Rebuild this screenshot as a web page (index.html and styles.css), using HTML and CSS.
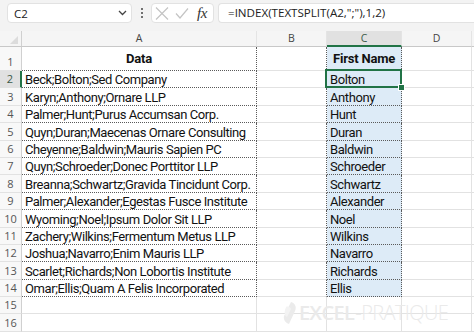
FILE: index.html
```html
<!DOCTYPE html>
<html>
<head>
<meta charset="utf-8">
<link rel="stylesheet" href="styles.css">
</head>
<body>
<div class="fbar">
  <div class="namebox"><span class="ref">C2</span>
    <svg class="chev" width="9" height="6" viewBox="0 0 9 6"><path d="M1 1 L4.5 4.5 L8 1" fill="none" stroke="#444" stroke-width="1.3"/></svg>
  </div>
  <div class="dots"><i></i><i></i><i></i></div>
  <div class="fxbox">
    <svg width="14" height="13" viewBox="0 0 14 13"><path d="M1 0.5 L13 12.5 M13 0.5 L1 12.5" stroke="#c4c4c4" stroke-width="1.2" fill="none"/></svg>
    <svg width="14" height="11" viewBox="0 0 14 11"><path d="M1 5.5 L5 10 L13 0.5" stroke="#c4c4c4" stroke-width="1.2" fill="none"/></svg>
    <span class="fx">fx</span>
  </div>
  <div class="formula">=INDEX(TEXTSPLIT(A2,";"),1,2)</div>
</div>
<div class="sheet">
  <div class="corner"><svg width="8" height="8" viewBox="0 0 8 8"><path d="M8 0 L8 8 L0 8 Z" fill="#dcdcdc"/></svg></div>
  <div class="ch">A</div><div class="ch">B</div><div class="ch sel">C</div><div class="ch">D</div><div class="ch last"></div>

  <div class="rh">1</div><div class="a t hd">Data</div><div class="b t"></div><div class="c t hd">First Name</div><div class="d"></div><div class="e"></div>
  <div class="rh sel">2</div><div class="a t">Beck;Bolton;Sed Company</div><div class="b t"></div><div class="c t active">Bolton</div><div class="d"></div><div class="e"></div>
  <div class="rh">3</div><div class="a t">Karyn;Anthony;Ornare LLP</div><div class="b t"></div><div class="c t">Anthony</div><div class="d"></div><div class="e"></div>
  <div class="rh">4</div><div class="a t">Palmer;Hunt;Purus Accumsan Corp.</div><div class="b t"></div><div class="c t">Hunt</div><div class="d"></div><div class="e"></div>
  <div class="rh">5</div><div class="a t">Quyn;Duran;Maecenas Ornare Consulting</div><div class="b t"></div><div class="c t">Duran</div><div class="d"></div><div class="e"></div>
  <div class="rh">6</div><div class="a t">Cheyenne;Baldwin;Mauris Sapien PC</div><div class="b t"></div><div class="c t">Baldwin</div><div class="d"></div><div class="e"></div>
  <div class="rh">7</div><div class="a t">Quyn;Schroeder;Donec Porttitor LLP</div><div class="b t"></div><div class="c t">Schroeder</div><div class="d"></div><div class="e"></div>
  <div class="rh">8</div><div class="a t">Breanna;Schwartz;Gravida Tincidunt Corp.</div><div class="b t"></div><div class="c t">Schwartz</div><div class="d"></div><div class="e"></div>
  <div class="rh">9</div><div class="a t">Palmer;Alexander;Egestas Fusce Institute</div><div class="b t"></div><div class="c t">Alexander</div><div class="d"></div><div class="e"></div>
  <div class="rh">10</div><div class="a t">Wyoming;Noel;Ipsum Dolor Sit LLP</div><div class="b t"></div><div class="c t">Noel</div><div class="d"></div><div class="e"></div>
  <div class="rh">11</div><div class="a t">Zachery;Wilkins;Fermentum Metus LLP</div><div class="b t"></div><div class="c t">Wilkins</div><div class="d"></div><div class="e"></div>
  <div class="rh">12</div><div class="a t">Joshua;Navarro;Enim Mauris LLP</div><div class="b t"></div><div class="c t">Navarro</div><div class="d"></div><div class="e"></div>
  <div class="rh">13</div><div class="a t">Scarlet;Richards;Non Lobortis Institute</div><div class="b t"></div><div class="c t">Richards</div><div class="d"></div><div class="e"></div>
  <div class="rh">14</div><div class="a t">Omar;Ellis;Quam A Felis Incorporated</div><div class="b t"></div><div class="c t">Ellis</div><div class="d"></div><div class="e"></div>
  <div class="rh">15</div><div class="a"></div><div class="b"></div><div class="c"></div><div class="d"></div><div class="e"></div>
  <div class="rh">16</div><div class="a"></div><div class="b"></div><div class="c"></div><div class="d"></div><div class="e"></div>

  <div class="watermark">
    <svg width="16" height="24" viewBox="0 0 16 24"><path d="M9 1 C13 2 15 6 13 10 L7 23 C4 22 1 19 2 15 Z" fill="#ebebeb"/><path d="M4 6 C6 5 8 6 9 8 L5 16 C3 15 2 12 3 9 Z" fill="#f3f3f3"/></svg>
    <span class="wm-bold">EXCEL</span><span class="wm-light">-PRATIQUE</span>
  </div>
</div>
</body>
</html>
```

FILE: styles.css
```css
html, body {
  margin: 0;
  padding: 0;
}
body {
  width: 474px;
  height: 335px;
  overflow: hidden;
  background: #fff;
  font-family: Roboto, "Liberation Sans", sans-serif;
}

/* formula bar */
.fbar {
  display: flex;
  align-items: flex-start;
  height: 31px;
  box-sizing: border-box;
  padding: 3px 0 0 7px;
  background: #f3f3f3;
  font-family: "Open Sans", sans-serif;
}
.namebox {
  width: 125px;
  height: 20px;
  box-sizing: border-box;
  background: #fff;
  border: 1px solid #e2e2e2;
  border-radius: 4px;
  display: flex;
  align-items: center;
  justify-content: space-between;
  padding: 0 4px 0 6px;
  font-size: 11.5px;
  color: #222;
}
.dots {
  width: 19px;
  height: 20px;
  display: flex;
  flex-direction: column;
  align-items: center;
  justify-content: center;
  gap: 2px;
}
.dots i {
  width: 2px;
  height: 2px;
  background: #444;
  border-radius: 1px;
}
.fxbox {
  width: 63px;
  height: 20px;
  box-sizing: border-box;
  background: #fff;
  border: 1px solid #e2e2e2;
  border-radius: 4px;
  display: flex;
  align-items: center;
  padding: 0 0 0 3px;
  gap: 6px;
}
.fx {
  font-family: "Liberation Serif", serif;
  font-style: italic;
  font-size: 15px;
  color: #333;
  margin-left: 2px;
  letter-spacing: -0.5px;
}
.formula {
  flex: 1;
  margin-left: 4px;
  height: 20px;
  box-sizing: border-box;
  background: #fff;
  border: 1px solid #e2e2e2;
  border-right: none;
  border-radius: 4px 0 0 4px;
  padding-left: 9px;
  font-size: 11.6px;
  line-height: 18px;
  color: #222;
  white-space: nowrap;
}

/* sheet grid */
.sheet {
  position: relative;
  display: grid;
  grid-template-columns: 22px 235px 70px 75px 70px 1fr;
  grid-template-rows: 16px 24px repeat(15, 17.4px);
  font-size: 13px;
  letter-spacing: -0.42px;
  color: #111;
}
.sheet > div {
  box-sizing: border-box;
  border-right: 1px solid #e2e2e2;
  border-bottom: 1px solid #e2e2e2;
  display: flex;
  align-items: flex-end;
  white-space: nowrap;
  overflow: hidden;
  line-height: 15px;
  padding: 0 0 0 3px;
}
.sheet > .corner {
  background: #f5f5f5;
  border-bottom: 1px solid #c8c8c8;
  border-right: 1px solid #d0d0d0;
  align-items: flex-end;
  justify-content: flex-end;
  padding: 0 3px 2px 0;
}
.sheet > .ch {
  background: #f5f5f5;
  border-bottom: 1px solid #c8c8c8;
  border-right: 1px solid #e4e4e4;
  justify-content: center;
  align-items: center;
  padding: 0;
  font-family: "Open Sans", sans-serif;
  font-size: 10.5px;
  letter-spacing: 0;
  color: #444;
}
.sheet > .ch.last {
  border-right: none;
}
.sheet > .ch.sel {
  background: #e1e1e1;
  border-bottom: 2px solid #217346;
  color: #3c5a48;
}
.sheet > .rh {
  background: #f8f8f8;
  border-right: 1px solid #d0d0d0;
  justify-content: center;
  padding: 0 0 1px 0;
  font-family: "Open Sans", sans-serif;
  font-size: 11px;
  letter-spacing: 0;
  color: #555;
}
.sheet > .rh.sel {
  background: #e1e1e1;
  border-right: 2px solid #217346;
  color: #3c5a48;
}
.sheet > .a.t {
  border-right: 1px dotted #5a5a5a;
  border-bottom: 1px dotted #5a5a5a;
}
.sheet > .b.t {
  border-right: 1px dotted #5a5a5a;
}
.sheet > .c.t {
  background: #ddebf7;
  border-right: 1px dotted #5a5a5a;
  border-bottom: 1px dotted #5a5a5a;
}
.sheet > .hd {
  font-weight: bold;
  justify-content: center;
  align-items: center;
  padding: 0;
  letter-spacing: -0.2px;
}
.sheet > .e {
  border-right: none;
}
.sheet > .active {
  position: relative;
  overflow: visible;
}
.active::before {
  content: "";
  position: absolute;
  left: -2px;
  top: -2px;
  right: -1px;
  bottom: -1px;
  border: 2px solid #217346;
  pointer-events: none;
}
.active::after {
  content: "";
  position: absolute;
  right: -4px;
  bottom: -4px;
  width: 5px;
  height: 5px;
  background: #217346;
  border: 1px solid #fff;
}
.sheet > .watermark {
  position: absolute;
  left: 282px;
  top: 269px;
  border: none;
  padding: 0;
  display: flex;
  align-items: center;
  gap: 1px;
  overflow: visible;
  font-family: "Open Sans", sans-serif;
  font-size: 20px;
  line-height: 26px;
  color: #eaeaea;
  letter-spacing: -0.6px;
}
.wm-bold {
  font-weight: 600;
}
.wm-light {
  font-weight: 300;
}
```
